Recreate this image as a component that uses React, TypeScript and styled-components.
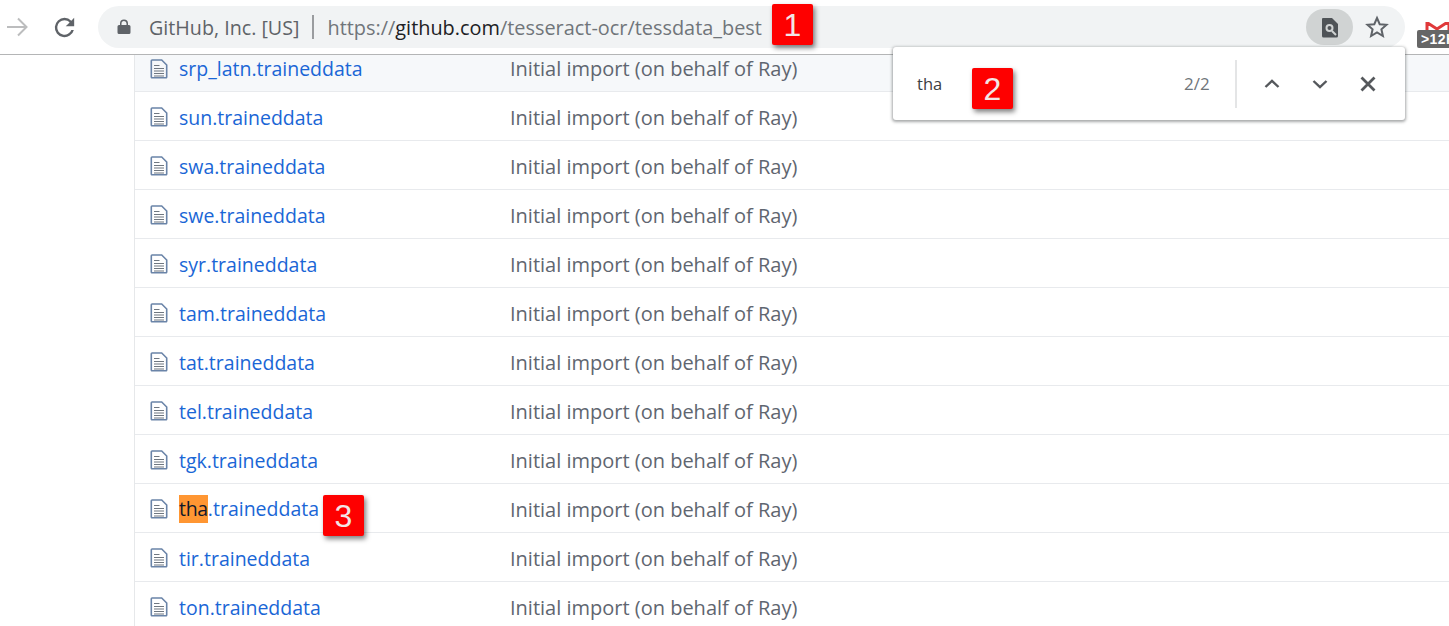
import React from "react";
import styled, { createGlobalStyle } from "styled-components";

const Global = createGlobalStyle`
  html, body { margin: 0; padding: 0; background: #fff; overflow: hidden; }
  body { font-family: "Open Sans", "Noto Sans", "Liberation Sans", sans-serif; }
`;

const Page = styled.div`
  position: relative;
  width: 1449px;
  height: 626px;
  overflow: hidden;
`;

const Toolbar = styled.header`
  border-bottom: 1px solid #b4b5b6;
  display: flex;
  align-items: flex-start;
  padding-top: 6px;
  height: 48px;
`;

const NavButton = styled.div<{ $w: number }>`
  width: ${(p) => p.$w}px;
  height: 42px;
  display: flex;
  align-items: center;
  justify-content: center;
  flex: none;
`;

const Omnibox = styled.div`
  margin-left: 3px;
  width: 1307px;
  height: 42px;
  border-radius: 21px;
  background: #f1f3f4;
  display: flex;
  align-items: center;
  padding: 0 4px 0 19px;
  box-sizing: border-box;
  flex: none;
  font-size: 19.9px;
  white-space: nowrap;
`;

const Secure = styled.span`
  margin-left: 18px;
  color: #5f6368;
  font-size: 19.7px;
`;

const Sep = styled.span`
  width: 2px;
  height: 24px;
  background: #9a9c9f;
  margin: 0 13px 0 13px;
`;

const Scheme = styled.span`
  color: #70757a;
`;

const Host = styled.span`
  color: #202124;
`;

const Path = styled.span`
  color: #70757a;
`;

const Spacer = styled.div`
  flex: 1;
`;

const PageAction = styled.div`
  width: 47px;
  height: 36px;
  border-radius: 18px;
  background: #d0d3d3;
  display: flex;
  align-items: center;
  justify-content: center;
`;

const StarBox = styled.div`
  width: 48px;
  display: flex;
  justify-content: center;
`;

const Extension = styled.div`
  position: absolute;
  left: 1417px;
  top: 16px;
  width: 32px;
  height: 32px;
  overflow: hidden;
`;

const ExtBadge = styled.div`
  position: absolute;
  left: 0;
  top: 14px;
  width: 40px;
  height: 18px;
  border-radius: 2px;
  background: #666;
  color: #fff;
  font: bold 14px/19px "Liberation Sans", sans-serif;
  letter-spacing: 0.4px;
  padding-left: 4px;
  white-space: nowrap;
`;

const Listing = styled.main`
  margin-left: 134px;
  border-left: 1px solid #e6e8ea;
`;

const Row = styled.div<{ $first?: boolean }>`
  height: ${(p) => (p.$first ? 37 : 49)}px;
  box-sizing: border-box;
  border-bottom: 1px solid #e8eaed;
  background: ${(p) => (p.$first ? "#f6f8fa" : "#fff")};
  padding: ${(p) => (p.$first ? "0 0 9px" : "2px 0 0")};
  display: flex;
  align-items: center;
  font-size: 19.5px;
  white-space: nowrap;
`;

const FileCell = styled.div`
  width: 375px;
  flex: none;
  display: flex;
  align-items: center;
  padding-left: 15px;
  box-sizing: border-box;
`;

const FileName = styled.span`
  margin-left: 11px;
  color: #1a66d6;
`;

const Match = styled.span`
  background: #ff9632;
  color: #10182a;
  display: inline-block;
  line-height: 28px;
  letter-spacing: -0.3px;
`;

const Message = styled.span`
  color: #5f6670;
  font-size: 20px;
`;

const FindBar = styled.div`
  position: absolute;
  left: 893px;
  top: 47px;
  width: 512px;
  height: 73px;
  background: #fff;
  border-radius: 3px;
  box-shadow: 0 1px 3px 1px rgba(60, 64, 67, 0.45);
  display: flex;
  align-items: center;
  box-sizing: border-box;
  padding-left: 24px;
`;

const FindText = styled.span`
  font-size: 16.5px;
  color: #3c4043;
  width: 267px;
`;

const FindCount = styled.span`
  font-size: 17px;
  color: #70757a;
  width: 51px;
`;

const FindDivider = styled.div`
  width: 2px;
  height: 48px;
  background: #e4e5e6;
  flex: none;
`;

const FindButtons = styled.div`
  display: flex;
  margin-left: 11px;
`;

const FindButton = styled.div`
  width: 48px;
  height: 48px;
  display: flex;
  align-items: center;
  justify-content: center;
`;

const Callout = styled.div<{ $x: number; $y: number }>`
  position: absolute;
  left: ${(p) => p.$x}px;
  top: ${(p) => p.$y}px;
  width: 41px;
  height: 41px;
  border-radius: 2px;
  background: #fe0000;
  color: #f2e6e6;
  box-shadow: 2px 3px 5px rgba(0, 0, 0, 0.5);
  display: flex;
  align-items: center;
  justify-content: center;
  font: 32px/1 "Liberation Sans", Arial, sans-serif;
`;

const FileIcon = () => (
  <svg width="18" height="20" viewBox="0 0 18 20" fill="none" stroke="#6a84a8" strokeWidth="1.6">
    <path d="M1.300 1.800a.8.8 0 0 1 .8-.8h9.600l5 5v12a.8.8 0 0 1-.8.8H2.100a.8.8 0 0 1-.8-.8z" />
    <path d="M4 6.500h5.500M4 9.500h10M4 12h10M4 14.500h10M4 17h10" strokeWidth="1.200" stroke="#6f7780" />
  </svg>
);

const files = ["sun", "swa", "swe", "syr", "tam", "tat", "tel", "tgk", "tha", "tir", "ton"];
const message = "Initial import (on behalf of Ray)";

export default function App() {
  return (
    <Page>
      <Global />
      <Toolbar>
        <NavButton $w={34}>
          <svg width="24" height="24" viewBox="0 0 24 24" fill="none" stroke="#bcbdbe" strokeWidth="2">
            <path d="M2 12h19M13 3.500l8.500 8.500-8.500 8.500" />
          </svg>
        </NavButton>
        <NavButton $w={61}>
          <svg width="29" height="29" viewBox="0 0 24 24" fill="#5f6368">
            <path d="M17.650 6.350A7.960 7.960 0 0 0 12 4a8 8 0 1 0 7.740 10h-2.080A6 6 0 1 1 12 6c1.660 0 3.140.69 4.220 1.780L13 11h7V4z" />
          </svg>
        </NavButton>
        <Omnibox>
          <svg width="14" height="16" viewBox="0 0 14 16" fill="#5f6368">
            <path d="M3 6V4.500a4 4 0 0 1 8 0V6h1a1.500 1.500 0 0 1 1.500 1.500v6A1.500 1.500 0 0 1 12 15H2a1.500 1.500 0 0 1-1.500-1.500v-6A1.500 1.500 0 0 1 2 6zm1.500 0h5V4.500a2.500 2.500 0 0 0-5 0z" />
          </svg>
          <Secure>GitHub, Inc. [US]</Secure>
          <Sep />
          <Scheme>https://</Scheme>
          <Host>github.com</Host>
          <Path>/tesseract-ocr/tessdata_best</Path>
          <Spacer />
          <PageAction>
            <svg width="18" height="21" viewBox="0 0 18 21">
              <path d="M2 1h9l6 6v12a1.500 1.500 0 0 1-1.500 1.500h-13A1.500 1.500 0 0 1 1 19V2a1 1 0 0 1 1-1z" fill="#4f5357" />
              <circle cx="8.500" cy="11" r="4" fill="#d0d3d3" />
              <circle cx="8.500" cy="11" r="2" fill="#4f5357" />
              <path d="M11 14l4 4" stroke="#d0d3d3" strokeWidth="2" />
            </svg>
          </PageAction>
          <StarBox>
            <svg width="24" height="24" viewBox="0 0 24 24" fill="none" stroke="#5f6368" strokeWidth="2">
              <path d="M12 3l2.700 6.200 6.800.6-5.100 4.500 1.500 6.700L12 17.500 6.100 21l1.500-6.700L2.500 9.800l6.800-.6z" />
            </svg>
          </StarBox>
        </Omnibox>
      </Toolbar>
      <Extension>
        <svg width="32" height="14" viewBox="0 0 32 14">
          <path d="M10 14V4.500h1.500L20 10l8.500-5.500H32V14" fill="none" stroke="#e0393a" strokeWidth="3" />
        </svg>
        <ExtBadge>&gt;12H</ExtBadge>
      </Extension>
      <Listing>
        <Row $first>
          <FileCell>
            <FileIcon />
            <FileName>srp_latn.traineddata</FileName>
          </FileCell>
          <Message>{message}</Message>
        </Row>
        {files.map((f) => (
          <Row key={f}>
            <FileCell>
              <FileIcon />
              <FileName>
                {f === "tha" ? <Match>tha</Match> : f}.traineddata
              </FileName>
            </FileCell>
            <Message>{message}</Message>
          </Row>
        ))}
      </Listing>
      <FindBar>
        <FindText>tha</FindText>
        <FindCount>2/2</FindCount>
        <FindDivider />
        <FindButtons>
          <FindButton>
            <svg width="18" height="18" viewBox="0 0 18 18" fill="none" stroke="#55585c" strokeWidth="2.400">
              <path d="M2.500 12L9 5.800 15.500 12" />
            </svg>
          </FindButton>
          <FindButton>
            <svg width="18" height="18" viewBox="0 0 18 18" fill="none" stroke="#55585c" strokeWidth="2.400">
              <path d="M2.500 6L9 12.200 15.500 6" />
            </svg>
          </FindButton>
          <FindButton>
            <svg width="18" height="18" viewBox="0 0 18 18" fill="none" stroke="#55585c" strokeWidth="2.800">
              <path d="M2.500 2.500l13 13M15.500 2.500l-13 13" />
            </svg>
          </FindButton>
        </FindButtons>
      </FindBar>
      <Callout $x={772} $y={4}>1</Callout>
      <Callout $x={972} $y={68}>2</Callout>
      <Callout $x={323} $y={495}>3</Callout>
    </Page>
  );
}
